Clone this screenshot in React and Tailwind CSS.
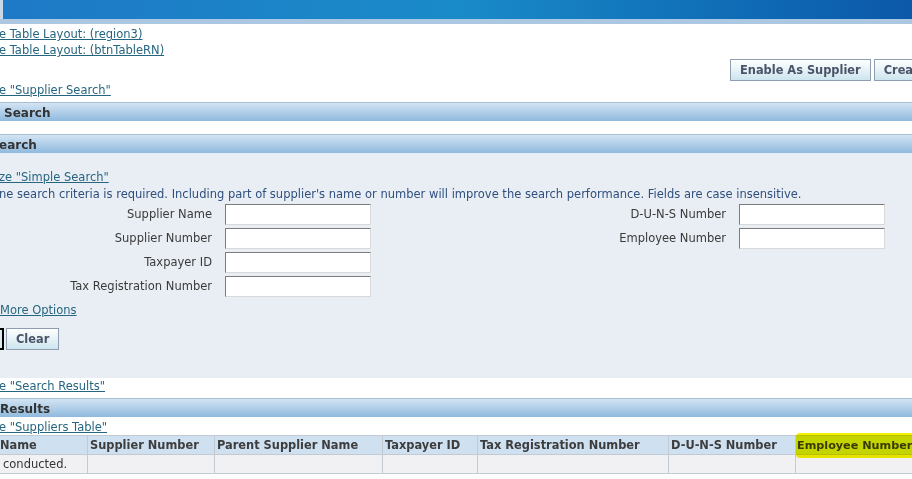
import React from 'react';

const linkCls = 'text-[#25657f] underline underline-offset-1 whitespace-nowrap';

const HeaderBar = ({ children }) => (
  <div className="h-[19px] border-t border-[#a9bfd6] bg-gradient-to-b from-[#d3e4f3] to-[#8fbade] flex items-center pt-[2px]">
    <span className="font-bold text-[12px] text-[#333] leading-none whitespace-nowrap">{children}</span>
  </div>
);

const LinkRow = ({ children, className = '' }) => (
  <div className={`h-4 flex items-center pt-[2px] ${className}`}>
    <span className={linkCls}>{children}</span>
  </div>
);

const Field = ({ label, labelW }) => (
  <div className="h-6 flex items-center">
    <div className={`${labelW} text-right pr-[13px] pt-[2px] text-[#3a3a3a] whitespace-nowrap`}>{label}</div>
    <div className="w-[146px] h-[21px] bg-white border border-t-[#7b7b7b] border-l-[#7b7b7b] border-r-[#d9d9d9] border-b-[#d9d9d9]" />
  </div>
);

const Button = ({ children, className = '' }) => (
  <div
    className={`h-[22px] flex items-center pt-[1px] px-[9px] border border-[#8f9db0] bg-gradient-to-b from-white to-[#cde5ee] font-bold text-[11.4px] text-[#4a5468] whitespace-nowrap ${className}`}
  >
    {children}
  </div>
);

const columns = [
  { name: 'Name', w: 'w-[88px]' },
  { name: 'Supplier Number', w: 'w-[127px]' },
  { name: 'Parent Supplier Name', w: 'w-[168px]' },
  { name: 'Taxpayer ID', w: 'w-[95px]' },
  { name: 'Tax Registration Number', w: 'w-[191px]' },
  { name: 'D-U-N-S Number', w: 'w-[127px]' },
];

export default function App() {
  return (
    <div className="w-[912px] h-[479px] overflow-hidden bg-white font-['DejaVu_Sans',sans-serif] text-[11.5px] leading-none">
      {/* banner */}
      <div className="h-[19px] flex">
        <div className="w-[3px] bg-[#c9d9ea]" />
        <div className="flex-1 bg-gradient-to-r from-[#1e79c6] via-[#1a8bc9] to-[#0c58a9]" />
      </div>
      <div className="h-[5px] bg-[#acc7e2]" />

      <div className="pt-[2px] -ml-[1px]">
        <LinkRow>e Table Layout: (region3)</LinkRow>
        <LinkRow>e Table Layout: (btnTableRN)</LinkRow>
      </div>
      <div className="h-6 flex items-center gap-[3px] pl-[730px]">
        <Button>Enable As Supplier</Button>
        <Button className="shrink-0">Create Supplier</Button>
      </div>
      <LinkRow className="-ml-[1px]">e "Supplier Search"</LinkRow>
      <div className="h-1" />

      <HeaderBar>
        <span className="pl-1">Search</span>
      </HeaderBar>
      <div className="h-[13px]" />
      <HeaderBar>
        <span className="-ml-[1px]">earch</span>
      </HeaderBar>

      {/* search region */}
      <div className="h-[225px] bg-[#e9eef5] pt-4">
        <LinkRow className="-ml-[1px]">ze "Simple Search"</LinkRow>
        <div className="mt-[1px] h-4 pt-[2px] flex items-center text-[#2f4f7d] whitespace-nowrap -ml-[1px]">
          ne search criteria is required. Including part of supplier's name or number will improve the search performance. Fields are case insensitive.
        </div>
        <div className="flex">
          <div>
            <Field label="Supplier Name" labelW="w-[225px]" />
            <Field label="Supplier Number" labelW="w-[225px]" />
            <Field label="Taxpayer ID" labelW="w-[225px]" />
            <Field label="Tax Registration Number" labelW="w-[225px]" />
          </div>
          <div>
            <Field label="D-U-N-S Number" labelW="w-[368px]" />
            <Field label="Employee Number" labelW="w-[368px]" />
          </div>
        </div>
        <LinkRow className="mt-1">More Options</LinkRow>
        <div className="mt-[10px] flex items-center gap-[2px]">
          <div className="w-1 h-[22px] border-2 border-l-0 border-black bg-[#d8e9f0]" />
          <Button>Clear</Button>
        </div>
      </div>

      <LinkRow className="-ml-[1px]">e "Search Results"</LinkRow>
      <div className="h-1" />
      <HeaderBar>Results</HeaderBar>
      <LinkRow className="mt-[2px] -ml-[1px]">e "Suppliers Table"</LinkRow>

      {/* table */}
      <div className="border-t border-[#c4cad2]">
        <div className="flex h-[19px] bg-[#cfe0f1] border-b border-[#c4cad2]">
          {columns.map((c, i) => (
            <div
              key={c.name}
              className={`${c.w} shrink-0 flex items-center pt-[1px] font-bold text-[11.4px] text-[#3d3d3d] whitespace-nowrap border-r border-[#c4cad2] ${i === 0 ? '' : 'pl-[2px]'}`}
            >
              {c.name}
            </div>
          ))}
          <div className="relative flex-1 flex items-center pt-[1px] pl-[1px] font-bold text-[11.2px] text-[#3a3a00] whitespace-nowrap">
            <div className="absolute -top-[3px] -bottom-[4px] left-0 -right-2 bg-[#f2f200] mix-blend-multiply rounded-sm" />
            <span className="relative">Employee Number</span>
          </div>
        </div>
        <div className="flex h-[19px] bg-[#f1f1f4] border-b border-[#c4cad2]">
          {columns.map((c, i) => (
            <div
              key={c.name}
              className={`${c.w} shrink-0 flex items-center pt-[1px] text-[#333] whitespace-nowrap border-r border-[#c4cad2]`}
            >
              {i === 0 ? <span className="pl-[3px]">conducted.</span> : null}
            </div>
          ))}
          <div className="flex-1" />
        </div>
      </div>
    </div>
  );
}
